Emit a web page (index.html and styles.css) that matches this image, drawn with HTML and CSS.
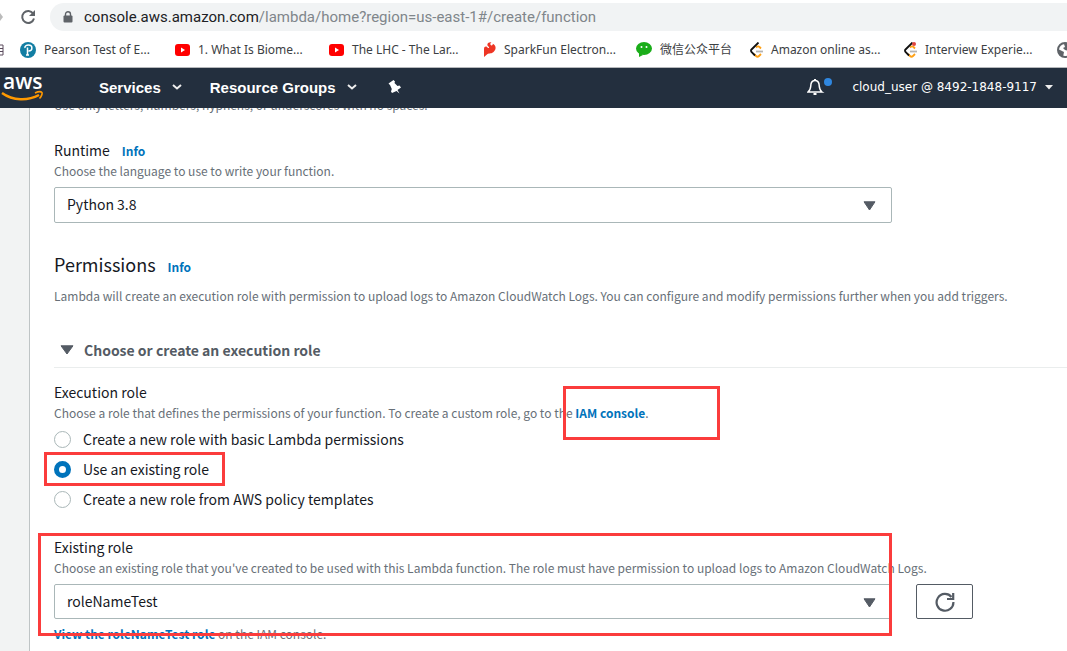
FILE: index.html
```html
<!DOCTYPE html>
<html lang="en">
<head>
  <meta charset="utf-8">
  <title>Create function - Lambda</title>
  <link rel="stylesheet" href="styles.css">
</head>
<body>

  <!-- Browser address bar -->
  <div class="toolbar">
    <svg class="forward" width="4" height="10" viewBox="0 0 4 10"><path d="M0 1l3 4-3 4z" fill="#bbb"/></svg>
    <button class="reload" aria-label="Reload">
      <svg width="16" height="16" viewBox="0 0 16 16"><path d="M13.2 4.6A6 6 0 1 0 14 9.6" fill="none" stroke="#5f6368" stroke-width="2"/><path d="M15 1v6H9z" fill="#5f6368"/></svg>
    </button>
    <div class="address">
      <svg width="10" height="12" viewBox="0 0 10 12"><path d="M2.5 5V3.2a2.5 2.5 0 0 1 5 0V5" fill="none" stroke="#5f6368" stroke-width="1.4"/><rect x="0.5" y="4.5" width="9" height="7" rx="1" fill="#5f6368"/></svg>
      <span class="url"><b>console.aws.amazon.com</b>/lambda/home?region=us-east-1#/create/function</span>
    </div>
  </div>

  <!-- Bookmarks -->
  <div class="bookmarks">
    <svg class="cut-left" width="4" height="12" viewBox="0 0 4 12"><path d="M0 1h3v10H0M0 4.500h3M0 7.500h3" fill="none" stroke="#5a4a5c"/></svg>
    <a href="#" class="pearson"><svg width="16" height="16" viewBox="0 0 16 16"><circle cx="8" cy="8" r="8" fill="#127ea3"/><path d="M5 6C4.500 4 6.500 3 8.500 3c4.500 0 4.500 6 0 6M7.500 5.500v7M6 13h3" fill="none" stroke="#fff" stroke-width="1.500"/></svg>Pearson Test of E...</a>
    <a href="#" class="tube1"><svg width="15" height="12" viewBox="0 0 15 12"><rect width="15" height="12" rx="3" fill="#f00"/><path d="M6 3.500l4 2.500-4 2.500z" fill="#fff"/></svg>1. What Is Biome...</a>
    <a href="#" class="tube2"><svg width="15" height="12" viewBox="0 0 15 12"><rect width="15" height="12" rx="3" fill="#f00"/><path d="M6 3.500l4 2.500-4 2.500z" fill="#fff"/></svg>The LHC - The Lar...</a>
    <a href="#" class="spark"><svg width="12" height="15" viewBox="0 0 12 15"><path d="M0 15V7c0-2.500 2-3 3-2 1 1.500 2.500 1 2 0C4 4 3 3.500 3.500 2 4 .5 5.500-.2 7.500.3 6 1 6 2.500 7 3.200c1 .6 2-.2 1.800-1.400C12 3 12.500 7 10 9.500 8 12 5 11 3.500 12z" fill="#ee3524"/></svg>SparkFun Electron...</a>
    <a href="#" class="wechat"><svg width="16" height="15" viewBox="0 0 16 15"><ellipse cx="8" cy="6.500" rx="8" ry="6.500" fill="#1aad19"/><path d="M3 10v5l4-2z" fill="#1aad19"/><circle cx="5.500" cy="5" r="1" fill="#fff"/><circle cx="10.500" cy="5" r="1" fill="#fff"/></svg>微信公众平台</a>
    <a href="#" class="leet1"><svg width="13" height="16" viewBox="0 0 13 16"><path d="M4 12l2 2q1.500 1.500 3 0l2-2M6 5.500q2-2 3.500-.5L11 6.500" fill="none" stroke="#ffa116" stroke-width="1.800"/><path d="M8.500.5L1.500 7.500q-1 1 0 2.500L5 13.500" fill="none" stroke="#111" stroke-width="1.800"/><path d="M6 9.500h7" stroke="#b3b3b3" stroke-width="1.800"/></svg>Amazon online as...</a>
    <a href="#" class="leet2"><svg width="13" height="16" viewBox="0 0 13 16"><path d="M4 12l2 2q1.500 1.500 3 0l2-2M6 5.500q2-2 3.500-.5L11 6.500" fill="none" stroke="#ffa116" stroke-width="1.800"/><path d="M8.500.5L1.500 7.500q-1 1 0 2.500L5 13.500" fill="none" stroke="#111" stroke-width="1.800"/><path d="M6 9.500h7" stroke="#b3b3b3" stroke-width="1.800"/><circle cx="10" cy="2" r="2" fill="#e0453e"/></svg>Interview Experie...</a>
    <a href="#" class="globe" aria-label="Bookmark"><svg width="16" height="16" viewBox="0 0 16 16"><circle cx="8" cy="8" r="7" fill="#fff" stroke="#5f6368" stroke-width="2"/><path d="M1 7l4 2 2 1-1 5-4-3zM7 2l1 3-2 1 2 2 4 1 2-4-3-3z" fill="#5f6368"/></svg></a>
  </div>

  <!-- AWS navigation -->
  <header class="nav">
    <svg class="logo" width="44" height="36" viewBox="0 0 44 36">
      <text x="3" y="20" class="logo-text">aws</text>
      <path d="M2 24c11 8 26 8 37 2" fill="none" stroke="#f90" stroke-width="2.400"/>
      <path d="M35 24c3-1.500 6-1.500 7-.5.500 1-.5 4-2.500 6" fill="none" stroke="#f90" stroke-width="1.600"/>
    </svg>
    <button class="services">Services <svg width="10" height="6" viewBox="0 0 10 6"><path d="M1 1l4 3.500L9 1" fill="none" stroke="#eee" stroke-width="2"/></svg></button>
    <button class="groups">Resource Groups <svg width="10" height="6" viewBox="0 0 10 6"><path d="M1 1l4 3.500L9 1" fill="none" stroke="#eee" stroke-width="2"/></svg></button>
    <button class="pin" aria-label="Pin"><svg width="13" height="14" viewBox="0 0 13 14"><path d="M.5 3.500L5.500 0 7 1.500 6.500 3l3 3 2-.5L13 7.500 9.500 10l2 3.500L8.500 11 4 13l-1-1.500.8-2.500L2 5z" fill="#fff"/></svg></button>
    <button class="bell" aria-label="Notifications"><svg width="26" height="18" viewBox="0 0 26 18"><path d="M1 14c3-2 2.500-5 3-8 .5-2.500 2-3.500 4-3.500S11.500 3.500 12 6c.5 3 0 6 3 8z" fill="none" stroke="#fff" stroke-width="1.500"/><path d="M8 1v2M6.500 16h3" stroke="#fff" stroke-width="2"/><circle cx="21" cy="4" r="4" fill="#2f87e0"/></svg></button>
    <button class="account">cloud_user @ 8492-1848-9117 <svg width="8" height="5" viewBox="0 0 8 5"><path d="M0 0h8L4 4.500z" fill="#eee"/></svg></button>
  </header>

  <main class="page">
    <div class="panel">
      <p class="hint name-hint">Use only letters, numbers, hyphens, or underscores with no spaces.</p>

      <!-- Runtime -->
      <div class="field runtime">
        <div class="label"><label for="runtime">Runtime</label><a href="#" class="info">Info</a></div>
        <p class="hint">Choose the language to use to write your function.</p>
        <div class="select">
          <select id="runtime"><option>Python 3.8</option></select>
          <svg width="13" height="10" viewBox="0 0 13 10"><path d="M1 .8h11L6.500 9z" fill="#545b64" stroke="#545b64" stroke-linejoin="round"/></svg>
        </div>
      </div>

      <!-- Permissions -->
      <h2>Permissions<a href="#" class="info">Info</a></h2>
      <p class="hint">Lambda will create an execution role with permission to upload logs to Amazon CloudWatch Logs. You can configure and modify permissions further when you add triggers.</p>

      <button class="expander"><svg width="14" height="10" viewBox="0 0 14 10"><path d="M1 .8h12L7 9z" fill="#545b64" stroke="#545b64" stroke-linejoin="round"/></svg>Choose or create an execution role</button>

      <div class="field" role="radiogroup" aria-labelledby="role-label">
        <div class="label" id="role-label">Execution role</div>
        <p class="hint">Choose a role that defines the permissions of your function. To create a custom role, go to the <span class="marked"><a href="#">IAM console</a><i class="mark mark-link"></i></span>.</p>
        <div class="radios">
          <label><input type="radio" name="role">Create a new role with basic Lambda permissions</label>
          <label><input type="radio" name="role" checked>Use an existing role<i class="mark mark-radio"></i></label>
          <label><input type="radio" name="role">Create a new role from AWS policy templates</label>
        </div>
      </div>

      <div class="field existing">
        <div class="label"><label for="existing">Existing role</label></div>
        <p class="hint">Choose an existing role that you've created to be used with this Lambda function. The role must have permission to upload logs to Amazon CloudWatch Logs.</p>
        <div class="row">
          <div class="select">
            <select id="existing"><option>roleNameTest</option></select>
            <svg width="13" height="10" viewBox="0 0 13 10"><path d="M1 .8h11L6.500 9z" fill="#545b64" stroke="#545b64" stroke-linejoin="round"/></svg>
          </div>
          <button class="refresh" aria-label="Refresh roles"><svg width="20" height="20" viewBox="0 0 20 20"><path d="M16.500 5A8.400 8.400 0 1 0 18.400 10" fill="none" stroke="#545b64" stroke-width="2.200"/><path d="M18.200 1v6H12" fill="none" stroke="#545b64" stroke-width="2.200"/></svg></button>
        </div>
        <p class="hint view"><a href="#">View the roleNameTest role</a> on the IAM console.</p>
        <i class="mark mark-existing"></i>
      </div>
    </div>
  </main>

</body>
</html>
```
FILE: styles.css
```css
* {
  box-sizing: border-box;
}

body {
  margin: 0;
  height: 100vh;
  display: flex;
  flex-direction: column;
  overflow: hidden;
  background-color: white;
  color: #16191f;
  font-family: "Noto Sans CJK SC", "Open Sans", sans-serif;
  font-size: 14px;
  line-height: 20px;
}

p, h2 {
  margin: 0;
}

a {
  color: #0073bb;
  text-decoration: none;
}

button {
  padding: 0;
  border: none;
  background: none;
  font-family: inherit;
  display: flex;
  align-items: center;
}

svg {
  flex: none;
}

/* browser bars */
.toolbar {
  display: flex;
  align-items: center;
  padding-top: 3px;
  flex: none;
}

.reload {
  margin: 0 14px 0 16px;
}

.address {
  flex: 1;
  display: flex;
  align-items: center;
  gap: 11px;
  height: 28px;
  padding-left: 13px;
  background-color: #f1f3f4;
  border-radius: 14px 0 0 14px;
}

.url {
  font-family: Roboto, sans-serif;
  font-size: 15px;
  color: #80868b;
  white-space: nowrap;
}

.url b {
  font-weight: normal;
  color: #202124;
}

.bookmarks {
  display: flex;
  align-items: center;
  flex: none;
  height: 37px;
  padding-top: 1px;
  border-bottom: 1px solid #b6b8bb;
  overflow: hidden;
}

.bookmarks a {
  display: flex;
  align-items: center;
  gap: 8px;
  flex: none;
  color: #3c4043;
  font-family: "Noto Sans", "Noto Sans CJK SC", sans-serif;
  font-size: 12px;
  white-space: nowrap;
}

.cut-left { margin-right: 16px; }
.pearson { width: 155px; }
.tube1 { width: 154px; }
.tube2 { width: 155px; }
.spark { width: 152px; }
.wechat { width: 114px; }
.leet1 { width: 154px; }
.leet2 { width: 153px; }

/* aws header */
.nav {
  display: flex;
  align-items: center;
  flex: none;
  height: 40px;
  padding: 0 14px 2px 0;
  background-color: #232f3e;
}

.nav button {
  color: #fff;
}

.nav .services,
.nav .groups {
  font-family: "Liberation Sans", Arial, sans-serif;
  font-size: 15px;
  font-weight: bold;
  gap: 11px;
}

.logo {
  overflow: visible;
}

.logo-text {
  font-family: "Open Sans", sans-serif;
  font-size: 21px;
  font-weight: 600;
  fill: #fff;
}

.services { margin-left: 55px; }
.groups { margin-left: 28px; }
.pin { margin-left: 31px; }
.bell { margin-left: auto; }

.nav .account {
  margin-left: 19px;
  gap: 8px;
  font-family: "DejaVu Sans", sans-serif;
  font-size: 12px;
}

/* create function form */
.page {
  flex: 1;
  min-height: 0;
  padding-left: 29px;
  overflow: hidden;
  background-color: #f2f3f3;
}

.panel {
  display: flow-root;
  height: 100%;
  padding-left: 24px;
  border-left: 1px solid #bfc4c5;
  background-color: white;
}

.hint {
  font-size: 12px;
  color: #687078;
  white-space: nowrap;
}

.hint a,
.info {
  font-size: 12px;
  font-weight: bold;
}

.info {
  margin-left: 12px;
}

.name-hint {
  margin-top: -13px;
}

.field {
  position: relative;
}

.runtime {
  margin-top: 25px;
}

.label {
  height: 21px;
}

.select {
  position: relative;
  width: 838px;
  margin-top: 6px;
}

.select select {
  display: block;
  width: 100%;
  height: 36px;
  padding: 0 12px 2px;
  appearance: none;
  border: 1px solid #aab7b8;
  border-radius: 2px;
  background-color: white;
  color: #16191f;
  font-family: inherit;
  font-size: 14px;
}

.select svg {
  position: absolute;
  right: 16px;
  top: 14px;
  pointer-events: none;
}

h2 {
  margin: 31px 0 9px;
  font-size: 18px;
  font-weight: normal;
  line-height: 20px;
}

.expander {
  width: 100%;
  height: 36px;
  margin: 26px 0 14px;
  padding: 0 0 0 6px;
  gap: 10px;
  border-bottom: 1px solid #eaeded;
  color: #545b64;
  font-size: 14px;
  font-weight: bold;
}

.radios label {
  position: relative;
  display: flex;
  align-items: center;
  gap: 12px;
  width: max-content;
  height: 30px;
}

.radios {
  margin-top: 1px;
}

.radios input {
  appearance: none;
  width: 17px;
  height: 17px;
  margin: 0;
  border: 1px solid #aab7b8;
  border-radius: 50%;
  background-color: white;
}

.radios input:checked {
  border: 5px solid #0073bb;
}

.existing {
  margin-top: 23px;
}

.row {
  display: flex;
  align-items: flex-end;
  gap: 24px;
}

.row .select select,
.refresh {
  height: 35px;
}

.refresh {
  justify-content: center;
  width: 57px;
  border: 1px solid #545b64;
  border-radius: 2px;
}

.view {
  margin-top: 5px;
}

/* red highlight boxes */
.marked {
  position: relative;
}

.mark {
  position: absolute;
  border: 3px solid #fb3c3c;
  pointer-events: none;
}

.mark-link {
  left: -12px;
  top: -18px;
  width: 157px;
  height: 54px;
}

.mark-radio {
  left: -10px;
  top: -2px;
  width: 181px;
  height: 34px;
}

.mark-existing {
  left: -16px;
  top: -4px;
  width: 854px;
  height: 103px;
}
```
